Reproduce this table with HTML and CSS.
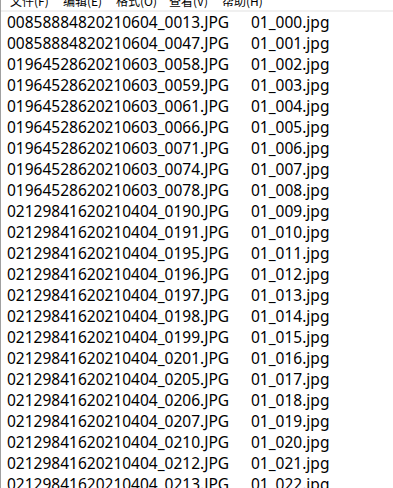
FILE: index.html
```html
<!DOCTYPE html>
<html lang="zh-CN">
<head>
<meta charset="utf-8">
<title>Notepad</title>
<link rel="stylesheet" href="styles.css">
</head>
<body>
<div class="window">
  <div class="menubar">
    <div class="menu-inner">
      <span class="menu-item">文件(F)</span>
      <span class="menu-item">编辑(E)</span>
      <span class="menu-item">格式(O)</span>
      <span class="menu-item">查看(V)</span>
      <span class="menu-item">帮助(H)</span>
    </div>
  </div>
  <div class="editor">
    <div class="row"><span>00858884820210604_0013.JPG</span><span>01_000.jpg</span></div>
    <div class="row"><span>00858884820210604_0047.JPG</span><span>01_001.jpg</span></div>
    <div class="row"><span>01964528620210603_0058.JPG</span><span>01_002.jpg</span></div>
    <div class="row"><span>01964528620210603_0059.JPG</span><span>01_003.jpg</span></div>
    <div class="row"><span>01964528620210603_0061.JPG</span><span>01_004.jpg</span></div>
    <div class="row"><span>01964528620210603_0066.JPG</span><span>01_005.jpg</span></div>
    <div class="row"><span>01964528620210603_0071.JPG</span><span>01_006.jpg</span></div>
    <div class="row"><span>01964528620210603_0074.JPG</span><span>01_007.jpg</span></div>
    <div class="row"><span>01964528620210603_0078.JPG</span><span>01_008.jpg</span></div>
    <div class="row"><span>02129841620210404_0190.JPG</span><span>01_009.jpg</span></div>
    <div class="row"><span>02129841620210404_0191.JPG</span><span>01_010.jpg</span></div>
    <div class="row"><span>02129841620210404_0195.JPG</span><span>01_011.jpg</span></div>
    <div class="row"><span>02129841620210404_0196.JPG</span><span>01_012.jpg</span></div>
    <div class="row"><span>02129841620210404_0197.JPG</span><span>01_013.jpg</span></div>
    <div class="row"><span>02129841620210404_0198.JPG</span><span>01_014.jpg</span></div>
    <div class="row"><span>02129841620210404_0199.JPG</span><span>01_015.jpg</span></div>
    <div class="row"><span>02129841620210404_0201.JPG</span><span>01_016.jpg</span></div>
    <div class="row"><span>02129841620210404_0205.JPG</span><span>01_017.jpg</span></div>
    <div class="row"><span>02129841620210404_0206.JPG</span><span>01_018.jpg</span></div>
    <div class="row"><span>02129841620210404_0207.JPG</span><span>01_019.jpg</span></div>
    <div class="row"><span>02129841620210404_0210.JPG</span><span>01_020.jpg</span></div>
    <div class="row"><span>02129841620210404_0212.JPG</span><span>01_021.jpg</span></div>
    <div class="row"><span>02129841620210404_0213.JPG</span><span>01_022.jpg</span></div>
  </div>
</div>
</body>
</html>
```
FILE: styles.css
```css
html, body {
  margin: 0;
  padding: 0;
  background: #ffffff;
}
body {
  width: 393px;
  height: 488px;
  overflow: hidden;
}
.window {
  height: 488px;
  border-left: 1px solid #a0a0a0;
  box-sizing: border-box;
  overflow: hidden;
}
.menubar {
  height: 10px;
  overflow: hidden;
  background: #ffffff;
  border-bottom: 2px solid #f0f0f0;
}
.menu-inner {
  display: flex;
  margin-top: -9px;
  padding-left: 9px;
  font-family: "Noto Sans CJK SC", sans-serif;
  font-size: 12px;
  line-height: 20px;
  color: #000000;
}
.menu-item {
  width: 53px;
  white-space: nowrap;
}
.editor {
  padding: 0 0 0 6px;
  font-family: "Noto Sans", "Liberation Sans", sans-serif;
  font-size: 15.5px;
  line-height: 21px;
  color: #000000;
}
.row {
  display: grid;
  grid-template-columns: 244px auto;
  white-space: pre;
}
```
